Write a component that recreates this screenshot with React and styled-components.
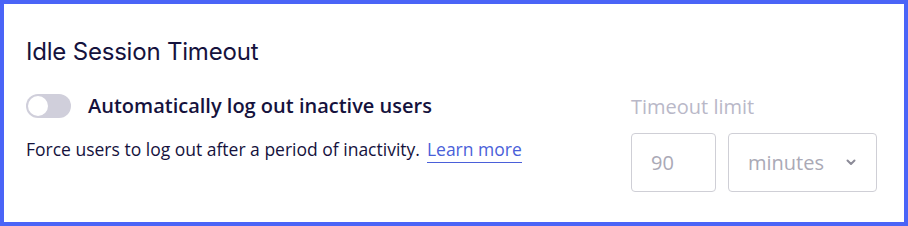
import React, { useState } from 'react';
import styled, { createGlobalStyle } from 'styled-components';

const GlobalStyle = createGlobalStyle`
    * { box-sizing: border-box; }
    body {
        margin: 0;
        background: #ffffff;
        font-family: "Open Sans", "Noto Sans", sans-serif;
    }
`

const Card = styled.section`
    width: 908px;
    height: 226px;
    border: 4px solid #4a64f7;
    background: #ffffff;
    padding: 32px 27px 0 22px;
`

const Title = styled.h2`
    margin: 0;
    font-family: Inter, "Open Sans", sans-serif;
    font-weight: 400;
    font-size: 24px;
    line-height: 32px;
    color: #15123d;
    letter-spacing: -0.2px;
`

const Body = styled.div`
    display: flex;
    justify-content: space-between;
    margin-top: 24px;
`

const Left = styled.div`
    display: flex;
    flex-direction: column;
`

const ToggleRow = styled.label`
    display: flex;
    align-items: center;
    gap: 17px;
    height: 28px;
    cursor: pointer;
`

const Track = styled.span`
    position: relative;
    width: 45px;
    height: 24px;
    border-radius: 12px;
    background: ${p => (p.on ? '#4a64f7' : '#d0cfdb')};
    transition: background 0.2s;
`

const Knob = styled.span`
    position: absolute;
    top: 2px;
    left: ${p => (p.on ? '23px' : '2px')};
    width: 20px;
    height: 20px;
    border-radius: 50%;
    background: #ffffff;
    transition: left 0.2s;
`

const ToggleLabel = styled.span`
    font-size: 20px;
    font-weight: 600;
    color: #15123d;
    line-height: 28px;
`

const Description = styled.p`
    margin: 16px 0 0;
    font-size: 17.5px;
    line-height: 26px;
    color: #15123d;
`

const LearnMore = styled.a`
    margin-left: 7px;
    color: #4a5fd9;
    text-decoration: none;
    border-bottom: 1px solid #4a5fd9;
    padding-bottom: 1px;
`

const Right = styled.div`
    display: flex;
    flex-direction: column;
`

const FieldLabel = styled.span`
    font-size: 20px;
    line-height: 28px;
    color: #b9b8c8;
    margin-top: 1px;
`

const Controls = styled.div`
    display: flex;
    gap: 12px;
    margin-top: 12px;
`

const Box = styled.div`
    display: flex;
    align-items: center;
    justify-content: space-between;
    width: ${p => p.width}px;
    height: 59px;
    border: 1px solid #cfcfd6;
    border-radius: 4px;
    padding: 0 20px 0 19px;
    font-size: 20px;
    color: #aaa9b6;
`

const Chevron = () => (
    <svg width="10" height="7" viewBox="0 0 10 7">
        <path d="M1.5 1.5 L5 5 L8.5 1.5" fill="none" stroke="#8c8b98" strokeWidth="2" strokeLinecap="round" strokeLinejoin="round" />
    </svg>
)

const App = () => {
    const [on, setOn] = useState(false);

    return (<>
        <GlobalStyle />
        <Card>
            <Title>Idle Session Timeout</Title>
            <Body>
                <Left>
                    <ToggleRow onClick={() => setOn(!on)}>
                        <Track on={on ? 1 : 0}>
                            <Knob on={on ? 1 : 0} />
                        </Track>
                        <ToggleLabel>Automatically log out inactive users</ToggleLabel>
                    </ToggleRow>
                    <Description>
                        Force users to log out after a period of inactivity.
                        <LearnMore href="#">Learn more</LearnMore>
                    </Description>
                </Left>
                <Right>
                    <FieldLabel>Timeout limit</FieldLabel>
                    <Controls>
                        <Box width={85}>90</Box>
                        <Box width={149}>
                            minutes
                            <Chevron />
                        </Box>
                    </Controls>
                </Right>
            </Body>
        </Card>
    </>);
}

export default App;
